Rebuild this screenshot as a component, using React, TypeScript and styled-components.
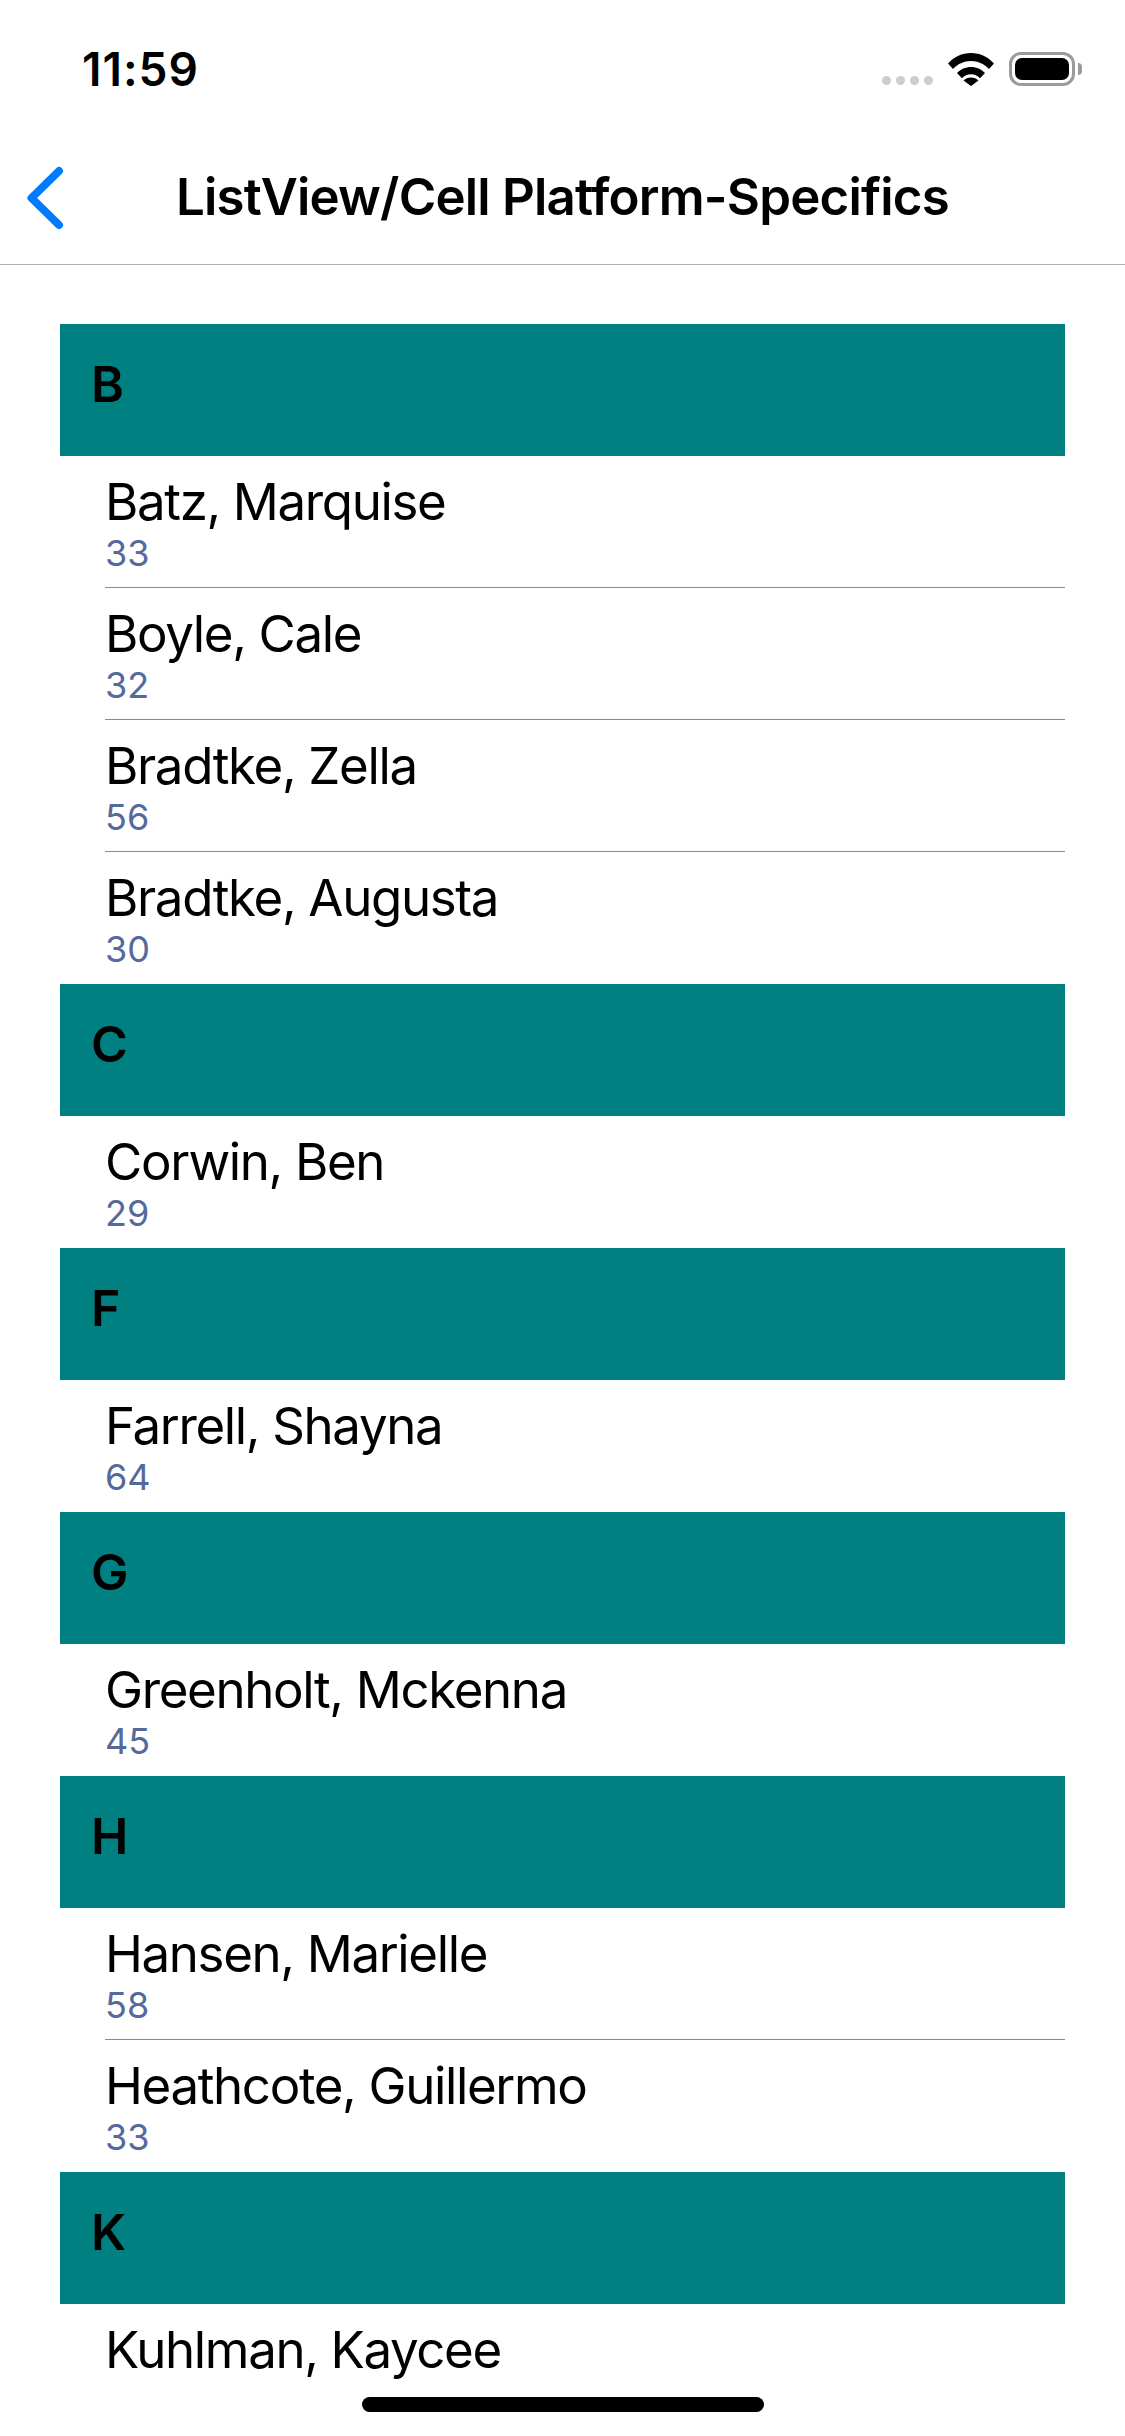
import React from "react";
import styled, { createGlobalStyle } from "styled-components";

const GlobalStyle = createGlobalStyle`
  html, body {
    margin: 0;
    padding: 0;
    background: #fff;
  }
  body {
    font-family: Inter, "Liberation Sans", sans-serif;
    color: #000;
  }
`;

const Screen = styled.div`
  position: relative;
  width: 1125px;
  height: 2436px;
  overflow: hidden;
  background: #fff;
`;

const StatusBar = styled.div`
  height: 132px;
  box-sizing: border-box;
  padding: 46px 50px 0 82px;
  display: flex;
  justify-content: space-between;
  align-items: flex-start;
`;

const Clock = styled.span`
  font-size: 46px;
  line-height: 46px;
  font-weight: 600;
  letter-spacing: 1px;
`;

const StatusIcons = styled.div`
  display: flex;
  align-items: flex-end;
  margin-top: 6px;
`;

const SignalDots = styled.div`
  display: flex;
  gap: 5px;
  margin: 0 15px 1px 0;
`;

const SignalDot = styled.span`
  width: 9px;
  height: 9px;
  border-radius: 50%;
  background: #cdcdcd;
`;

const Battery = styled.div`
  width: 66px;
  height: 34px;
  box-sizing: border-box;
  margin-left: 15px;
  padding: 3px;
  border: 3px solid #9b9b9b;
  border-radius: 12px;
  position: relative;
  &::after {
    content: "";
    position: absolute;
    right: -10px;
    top: 8px;
    width: 4px;
    height: 12px;
    border-radius: 0 4px 4px 0;
    background: #9b9b9b;
  }
`;

const BatteryFill = styled.div`
  height: 100%;
  border-radius: 7px;
  background: #000;
`;

const NavBar = styled.header`
  height: 133px;
  box-sizing: border-box;
  border-bottom: 1px solid #b2b2b2;
  padding-bottom: 2px;
  position: relative;
  display: flex;
  align-items: center;
  justify-content: center;
`;

const BackButton = styled.svg`
  position: absolute;
  left: 24px;
  top: 32px;
  width: 42px;
  height: 68px;
`;

const NavTitle = styled.h1`
  margin: 0;
  font-size: 51px;
  line-height: 60px;
  font-weight: 600;
  letter-spacing: -0.8px;
`;

const List = styled.main`
  height: 2120px;
  box-sizing: border-box;
  padding: 59px 60px 0;
  overflow: hidden;
`;

const SectionHeader = styled.div`
  height: 132px;
  box-sizing: border-box;
  padding: 0 0 12px 31px;
  display: flex;
  align-items: center;
  background: #008080;
  font-size: 50px;
  font-weight: 600;
`;

const Row = styled.div<{ $divider: boolean }>`
  height: 132px;
  box-sizing: border-box;
  margin-left: 45px;
  padding-top: 16px;
  border-bottom: 1px solid ${(p) => (p.$divider ? "#8a8a8a" : "transparent")};
`;

const Name = styled.div`
  font-size: 51px;
  line-height: 60px;
  letter-spacing: -1.35px;
`;

const Age = styled.div`
  font-size: 36px;
  line-height: 43px;
  color: #56699b;
`;

const HomeIndicator = styled.div`
  position: absolute;
  left: 362px;
  top: 2397px;
  width: 402px;
  height: 15px;
  border-radius: 8px;
  background: #000;
`;

const sections = [
  {
    letter: "B",
    people: [
      { name: "Batz, Marquise", age: "33" },
      { name: "Boyle, Cale", age: "32" },
      { name: "Bradtke, Zella", age: "56" },
      { name: "Bradtke, Augusta", age: "30" },
    ],
  },
  { letter: "C", people: [{ name: "Corwin, Ben", age: "29" }] },
  { letter: "F", people: [{ name: "Farrell, Shayna", age: "64" }] },
  { letter: "G", people: [{ name: "Greenholt, Mckenna", age: "45" }] },
  {
    letter: "H",
    people: [
      { name: "Hansen, Marielle", age: "58" },
      { name: "Heathcote, Guillermo", age: "33" },
    ],
  },
  { letter: "K", people: [{ name: "Kuhlman, Kaycee", age: "" }] },
];

export default function App() {
  return (
    <Screen>
      <GlobalStyle />
      <StatusBar>
        <Clock>11:59</Clock>
        <StatusIcons>
          <SignalDots>
            <SignalDot />
            <SignalDot />
            <SignalDot />
            <SignalDot />
          </SignalDots>
          <svg width="46" height="33" viewBox="0 0 46 33">
            <path d="M0 10.500C6 4 14 0 23 0s17 4 23 10.500l-5 5.500C36.500 11 30 8 23 8S9.500 11 5 16z" />
            <path d="M9 20c3.500-3.800 8.500-6 14-6s10.500 2.200 14 6l-5 5.200c-2.300-2.400-5.500-3.900-9-3.900s-6.700 1.500-9 3.900z" />
            <path d="M15.500 27.500c2-1.800 4.700-2.900 7.500-2.900s5.500 1.100 7.500 2.900L23 33z" />
          </svg>
          <Battery>
            <BatteryFill />
          </Battery>
        </StatusIcons>
      </StatusBar>
      <NavBar>
        <BackButton viewBox="0 0 42 68" fill="none">
          <path
            d="M35 7L7.500 34 35 61"
            stroke="#007aff"
            strokeWidth="8"
            strokeLinecap="round"
            strokeLinejoin="round"
          />
        </BackButton>
        <NavTitle>ListView/Cell Platform-Specifics</NavTitle>
      </NavBar>
      <List>
        {sections.map((section) => (
          <section key={section.letter}>
            <SectionHeader>{section.letter}</SectionHeader>
            {section.people.map((person, i) => (
              <Row key={person.name} $divider={i < section.people.length - 1}>
                <Name>{person.name}</Name>
                {person.age && <Age>{person.age}</Age>}
              </Row>
            ))}
          </section>
        ))}
      </List>
      <HomeIndicator />
    </Screen>
  );
}
